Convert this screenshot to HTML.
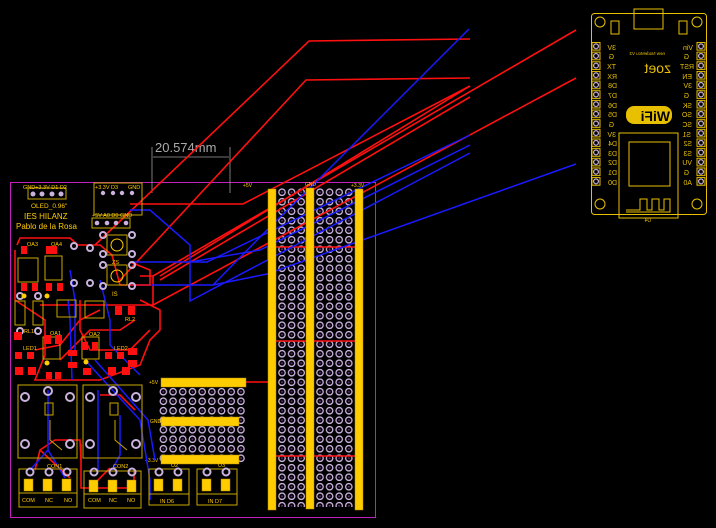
<!DOCTYPE html>
<html><head><meta charset="utf-8"><style>
html,body{margin:0;padding:0;background:#000;width:716px;height:528px;overflow:hidden}
svg{display:block}
text{font-family:"Liberation Sans",sans-serif}
</style></head><body>
<svg width="716" height="528" viewBox="0 0 716 528" xmlns="http://www.w3.org/2000/svg">
<defs>
<pattern id="bb" x="277.2" y="187.5" width="9.6" height="9.5" patternUnits="userSpaceOnUse">
<circle cx="4.8" cy="4.75" r="3.2" fill="#000" stroke="#c9b3dd" stroke-width="1.3"/><circle cx="4.8" cy="4.75" r="1" fill="#5a2a70"/>
</pattern>
<pattern id="bb2" x="315.2" y="187.5" width="9.6" height="9.5" patternUnits="userSpaceOnUse">
<circle cx="4.8" cy="4.75" r="3.2" fill="#000" stroke="#c9b3dd" stroke-width="1.3"/><circle cx="4.8" cy="4.75" r="1" fill="#5a2a70"/>
</pattern>
<pattern id="pb" x="158.5" y="387" width="9.7" height="9.5" patternUnits="userSpaceOnUse">
<circle cx="4.85" cy="4.75" r="3.2" fill="#000" stroke="#c9b3dd" stroke-width="1.3"/><circle cx="4.85" cy="4.75" r="1" fill="#5a2a70"/>
</pattern>
<pattern id="np" x="591" y="41.5" width="10" height="9.65" patternUnits="userSpaceOnUse">
<rect x="1" y="1" width="8" height="7.6" fill="none" stroke="#e8c000" stroke-width="1"/><circle cx="5" cy="4.8" r="2.4" fill="#000" stroke="#c9b3dd" stroke-width="1.2"/>
</pattern>
<pattern id="np2" x="696" y="41.5" width="10" height="9.65" patternUnits="userSpaceOnUse">
<rect x="1" y="1" width="8" height="7.6" fill="none" stroke="#e8c000" stroke-width="1"/><circle cx="5" cy="4.8" r="2.4" fill="#000" stroke="#c9b3dd" stroke-width="1.2"/>
</pattern>
</defs>

<rect x="10.5" y="182.5" width="365" height="335" fill="none" stroke="#c020c0" stroke-width="1"/>

<g stroke="#9a9a9a" stroke-width="0.8" fill="none">
<line x1="152" y1="147" x2="152" y2="193"/><line x1="230" y1="147" x2="230" y2="193"/>
<line x1="153" y1="157" x2="229" y2="157"/>
</g>
<text x="155" y="152" font-size="13" fill="#aaa">20.574mm</text>

<rect x="277" y="187" width="29" height="320" fill="url(#bb)"/>
<rect x="315" y="187" width="39" height="320" fill="url(#bb2)"/>
<rect x="158" y="387" width="88" height="76" fill="url(#pb)"/>

<g stroke="#ff1010" stroke-width="1.6" fill="none">
<polyline points="95,245 309,41 470,39"/>
<polyline points="120,280 306,80 470,78"/>
<polyline points="153,276 576,30"/>
<polyline points="153,305 576,78"/>
<polyline points="160,276 470,86"/>
<polyline points="160,280 470,97"/>
<polyline points="130,204 243,204 470,86"/>
<line x1="245" y1="382" x2="268" y2="382"/>
<line x1="270" y1="456" x2="363" y2="456"/>
<line x1="268" y1="247" x2="268" y2="260"/>
<line x1="306" y1="237" x2="306" y2="262"/>
<line x1="268" y1="247" x2="363" y2="247"/>
<line x1="268" y1="341" x2="363" y2="341"/>
<polyline points="140,276 153,276 153,305 40,305"/>
</g>
<g stroke="#1a1aff" stroke-width="1.5" fill="none">
<polyline points="469,29 315,183 267,230 213,285 130,285"/>
<polyline points="470,135 207,262 130,262"/>
<polyline points="470,145 260,250 190,262"/>
<polyline points="470,153 190,301 190,245 150,210 130,210"/>
<polyline points="576,164 267,274 213,285"/>
</g>

<g fill="#ffcc00" stroke="#b08a00" stroke-width="0.5">
<rect x="268" y="189" width="8" height="321"/>
<rect x="306" y="188" width="8" height="321"/>
<rect x="355" y="189" width="8" height="321"/>
<rect x="161" y="378" width="85" height="9"/>
<rect x="161" y="417" width="78" height="9"/>
<rect x="161" y="455" width="78" height="9"/>
</g>
<g font-size="5" fill="#ffcc00">
<text x="243" y="187">+5V</text><text x="305" y="186">GND</text><text x="351" y="187">+3.3V</text>
<text x="149" y="384">+5V</text><text x="150" y="423">GND</text><text x="145" y="462">+3.3V</text>
</g>

<g stroke="#ff1010" stroke-width="1.6" fill="none">
<polyline points="17,245 20,238 70,238 78,245 100,245 112,255 120,285 150,285 150,270 130,262"/>
<polyline points="15,250 15,300 45,320 45,355 35,380 100,380 140,365 150,340 160,330 160,310 140,300"/>
<polyline points="80,300 80,330 90,350 130,350 150,330"/>
<polyline points="35,470 40,450 55,440 80,440 81,460"/>
<polyline points="81,444 81,488 128,488 134,480 134,470"/>
<polyline points="35,350 60,345 80,320 100,310"/>
<polyline points="100,395 120,395 135,410"/>
<polyline points="60,360 90,330 120,330 135,320"/>
<line x1="96" y1="482" x2="110" y2="468"/>
<line x1="40" y1="450" x2="70" y2="478"/>
</g>
<g stroke="#1a1aff" stroke-width="1.5" fill="none">
<polyline points="68,300 70,320 72,380"/>
<polyline points="48,390 48,450 30,470"/>
<polyline points="98,390 98,470"/>
<polyline points="48,450 65,478"/>
<polyline points="70,270 75,300 75,350"/>
<polyline points="85,360 140,420 150,480 150,500"/>
<polyline points="95,360 148,420 155,460"/>
<polyline points="100,280 110,320 110,345 140,375"/>
<polyline points="120,415 120,455 112,470"/>
</g>

<g stroke="#c8a800" stroke-width="1" fill="none">
<rect x="28" y="188" width="38" height="11"/>
<rect x="94" y="183" width="48" height="32"/>
<rect x="92" y="218" width="38" height="10"/>
<rect x="107" y="235" width="20" height="20"/>
<rect x="107" y="265" width="20" height="20"/>
<rect x="18" y="258" width="20" height="24"/><rect x="45" y="256" width="17" height="24"/>
<rect x="15" y="301" width="10" height="24"/><rect x="33" y="301" width="10" height="24"/>
<rect x="57" y="300" width="19" height="17"/><rect x="85" y="301" width="19" height="17"/>
<rect x="43" y="337" width="17" height="22"/><rect x="82" y="337" width="17" height="22"/>
<rect x="18" y="385" width="59" height="73"/><rect x="83" y="385" width="59" height="73"/>
<rect x="19" y="469" width="58" height="38"/><rect x="84" y="471" width="57" height="37"/>
<rect x="149" y="469" width="40" height="36"/><rect x="197" y="469" width="40" height="36"/>
<line x1="19" y1="493" x2="77" y2="493"/><line x1="84" y1="494" x2="141" y2="494"/>
<line x1="149" y1="494" x2="189" y2="494"/><line x1="197" y1="494" x2="237" y2="494"/>
<rect x="45" y="403" width="8" height="12"/><rect x="110" y="403" width="8" height="12"/>
<polyline points="50,420 50,440 62,450"/><polyline points="115,420 115,440 127,450"/>
</g>
<g fill="#c9b3dd">
<circle cx="33" cy="194" r="2.5"/><circle cx="42" cy="194" r="2.5"/><circle cx="52" cy="194" r="2.5"/><circle cx="61" cy="194" r="2.5"/>
<circle cx="103" cy="193" r="2.2"/><circle cx="113" cy="193" r="2.2"/><circle cx="122" cy="193" r="2.2"/><circle cx="132" cy="193" r="2.2"/>
<circle cx="97" cy="223" r="2.3"/><circle cx="107" cy="223" r="2.3"/><circle cx="116" cy="223" r="2.3"/><circle cx="126" cy="223" r="2.3"/>
</g>
<g fill="none" stroke="#c9b3dd" stroke-width="2">
<circle cx="103" cy="235" r="3"/><circle cx="132" cy="235" r="3"/><circle cx="103" cy="254" r="3"/><circle cx="132" cy="254" r="3"/>
<circle cx="103" cy="265" r="3"/><circle cx="132" cy="265" r="3"/><circle cx="103" cy="286" r="3"/><circle cx="132" cy="286" r="3"/>
<circle cx="74" cy="246" r="3"/><circle cx="90" cy="248" r="3"/><circle cx="74" cy="283" r="3"/><circle cx="90" cy="283" r="3"/>
<circle cx="20" cy="296" r="3"/><circle cx="38" cy="296" r="3"/><circle cx="20" cy="331" r="3"/><circle cx="38" cy="331" r="3"/>
<circle cx="25" cy="397" r="4"/><circle cx="48" cy="391" r="4"/><circle cx="70" cy="397" r="4"/><circle cx="25" cy="444" r="4"/><circle cx="70" cy="444" r="4"/>
<circle cx="90" cy="397" r="4"/><circle cx="113" cy="391" r="4"/><circle cx="136" cy="397" r="4"/><circle cx="90" cy="444" r="4"/><circle cx="136" cy="444" r="4"/>
<circle cx="30" cy="472" r="3.5"/><circle cx="49" cy="472" r="3.5"/><circle cx="67" cy="472" r="3.5"/>
<circle cx="94" cy="472" r="3.5"/><circle cx="113" cy="472" r="3.5"/><circle cx="132" cy="472" r="3.5"/>
<circle cx="159" cy="472" r="3.5"/><circle cx="178" cy="472" r="3.5"/><circle cx="207" cy="472" r="3.5"/><circle cx="226" cy="472" r="3.5"/>
</g>
<g fill="none" stroke="#ffcc00" stroke-width="1">
<circle cx="117" cy="245" r="6"/><circle cx="117" cy="276" r="6"/>
</g>
<g fill="#ffcc00" stroke="#b08a00" stroke-width="0.5">
<rect x="24" y="479" width="9" height="12"/><rect x="43" y="479" width="9" height="12"/><rect x="62" y="479" width="9" height="12"/>
<rect x="89" y="480" width="9" height="12"/><rect x="108" y="480" width="9" height="12"/><rect x="127" y="480" width="9" height="12"/>
<rect x="154" y="479" width="9" height="12"/><rect x="173" y="479" width="9" height="12"/>
<rect x="202" y="479" width="9" height="12"/><rect x="221" y="479" width="9" height="12"/>
</g>
<g fill="#ff1010">
<rect x="21" y="246" width="6" height="8"/><rect x="46" y="246" width="6" height="8"/><rect x="51" y="246" width="6" height="8"/>
<rect x="21" y="283" width="6" height="8"/><rect x="32" y="283" width="6" height="8"/><rect x="46" y="283" width="6" height="8"/><rect x="57" y="283" width="6" height="8"/>
<rect x="115" y="306" width="7" height="9"/><rect x="128" y="306" width="7" height="9"/>
<rect x="14" y="332" width="8" height="8"/><rect x="44" y="335" width="7" height="9"/><rect x="55" y="335" width="7" height="9"/>
<rect x="15" y="352" width="7" height="7"/><rect x="27" y="352" width="7" height="7"/><rect x="68" y="350" width="9" height="6"/><rect x="68" y="362" width="9" height="6"/>
<rect x="105" y="352" width="7" height="7"/><rect x="117" y="352" width="7" height="7"/><rect x="128" y="348" width="9" height="7"/><rect x="128" y="360" width="9" height="7"/>
<rect x="15" y="367" width="8" height="8"/><rect x="28" y="367" width="8" height="8"/><rect x="83" y="368" width="8" height="7"/><rect x="108" y="367" width="8" height="8"/><rect x="122" y="367" width="8" height="8"/>
<rect x="46" y="372" width="6" height="7"/><rect x="55" y="372" width="6" height="7"/><rect x="82" y="342" width="6" height="8"/><rect x="92" y="342" width="6" height="8"/>
</g>
<g fill="#ffcc00"><circle cx="24" cy="296" r="2.5"/><circle cx="47" cy="296" r="2.5"/><circle cx="47" cy="363" r="2.5"/><circle cx="86" cy="362" r="2.5"/></g>
<g font-size="5.5" fill="#ffcc00">
<text x="23" y="189">GND+3.3V D1 D2</text><text x="95" y="189">+3.3V D3</text><text x="128" y="189">GND</text>
<text x="31" y="208" font-size="6.5">OLED_0.96"</text>
<text x="92" y="217">+5V A0 D0 GND</text>
<text x="24" y="219" font-size="8">IES HILANZ</text>
<text x="16" y="229" font-size="8">Pablo de la Rosa</text>
<text x="27" y="246">OA3</text><text x="51" y="246">OA4</text>
<text x="112" y="296" font-size="6">IS</text><text x="112" y="264">ZS</text>
<text x="50" y="335">OA1</text><text x="89" y="336">OA2</text>
<text x="23" y="350">LED1</text><text x="114" y="350">LED2</text>
<text x="125" y="321">RL2</text><text x="24" y="333">RL1</text>
<text x="22" y="502">COM</text><text x="45" y="502">NC</text><text x="64" y="502">NO</text>
<text x="88" y="502">COM</text><text x="109" y="502">NC</text><text x="127" y="502">NO</text>
<text x="160" y="503">IN D6</text><text x="208" y="503">IN D7</text>
<text x="47" y="468">CON1</text><text x="113" y="468">CON2</text>
<text x="171" y="467">U2</text><text x="218" y="467">U3</text>
</g>

<!-- NodeMCU -->
<g stroke="#e8c000" stroke-width="1" fill="none">
<rect x="591.5" y="13.5" width="115" height="201" rx="3"/>
<rect x="634" y="9" width="29" height="20"/>
<rect x="619" y="133" width="59" height="85"/>
<rect x="629" y="142" width="41" height="44"/>
<circle cx="600" cy="22" r="5"/><circle cx="697" cy="22" r="5"/><circle cx="600" cy="204" r="5"/><circle cx="697" cy="204" r="5"/>
<rect x="611" y="21" width="8" height="13"/><rect x="679" y="21" width="8" height="13"/>
<polyline points="626,210 640,210 640,199 647,199 647,210 652,210 652,199 659,199 659,210 664,210 664,199 670,199 670,212 626,212"/>
</g>
<rect x="591" y="41" width="10" height="145" fill="url(#np)"/>
<rect x="696" y="41" width="10" height="145" fill="url(#np2)"/>
<rect x="626" y="106" width="46" height="18" rx="8" fill="#e8c000"/>
<text x="630" y="121" font-size="14" font-weight="bold" fill="#000" transform="translate(1300,0) scale(-1,1)">WiFi</text>
<text x="630" y="73" font-size="14" fill="#e8c000" transform="translate(1301,0) scale(-1,1)">zoet</text>
<g font-size="7" fill="#e8c000" transform="translate(1297,0) scale(-1,1)">
<text x="681" y="50">3V</text><text x="683" y="59">G</text><text x="681" y="69">TX</text><text x="680" y="79">RX</text><text x="680" y="88">D8</text><text x="680" y="98">D7</text><text x="680" y="108">D6</text><text x="680" y="117">D5</text><text x="683" y="127">G</text><text x="681" y="137">3V</text><text x="680" y="146">D4</text><text x="680" y="156">D3</text><text x="680" y="165">D2</text><text x="680" y="175">D1</text><text x="680" y="185">D0</text>
<text x="604" y="50">Vin</text><text x="608" y="59">G</text><text x="603" y="69">RST</text><text x="605" y="79">EN</text><text x="605" y="88">3V</text><text x="608" y="98">G</text><text x="605" y="108">SK</text><text x="605" y="117">SO</text><text x="605" y="127">SC</text><text x="606" y="137">S1</text><text x="605" y="146">S2</text><text x="605" y="156">S3</text><text x="605" y="165">VU</text><text x="608" y="175">G</text><text x="605" y="185">A0</text>
<text x="632" y="55" font-size="4.5">new NodeMcu V3</text>
<text x="646" y="222" font-size="5">U4</text>
</g>
</svg>
</body></html>
